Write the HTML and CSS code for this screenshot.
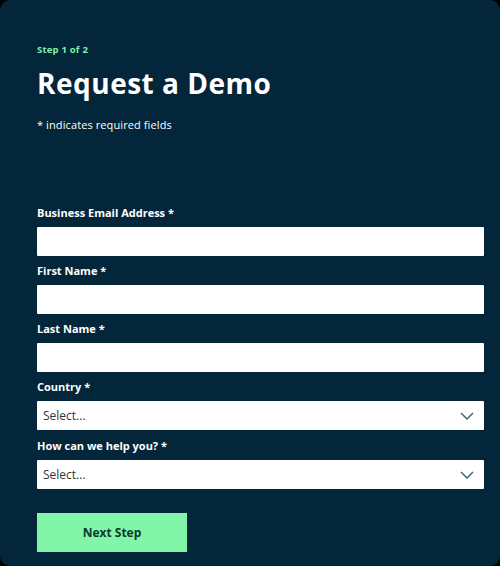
FILE: index.html
```html
<!DOCTYPE html>
<html lang="en">
<head>
    <meta charset="UTF-8">
    <meta name="viewport" content="width=device-width, initial-scale=1.0">
    <title>Request a Demo</title>
    <link rel="stylesheet" href="styles.css">
</head>
<body>
    <div class="container">
        <div class="step">Step 1 of 2</div>
        <h1>Request a Demo</h1>
        <p class="note">* indicates required fields</p>

        <form id="demoForm">
            <div class="form-group">
                <label for="email">Business Email Address *</label>
                <input type="text" id="email" name="email">
            </div>
            <div class="form-group">
                <label for="firstname">First Name *</label>
                <input type="text" id="firstname" name="firstname">
            </div>
            <div class="form-group">
                <label for="lastname">Last Name *</label>
                <input type="text" id="lastname" name="lastname">
            </div>
            <div class="form-group wide">
                <label for="country">Country *</label>
                <div class="select">
                    <select id="country" name="country">
                        <option>Select...</option>
                    </select>
                    <svg class="chevron" viewBox="0 0 14 8" width="14" height="8">
                        <path d="M1 1l6 6 6-6" fill="none" stroke="#4b6b80" stroke-width="1.6"/>
                    </svg>
                </div>
            </div>
            <div class="form-group">
                <label for="help">How can we help you? *</label>
                <div class="select">
                    <select id="help" name="help">
                        <option>Select...</option>
                    </select>
                    <svg class="chevron" viewBox="0 0 14 8" width="14" height="8">
                        <path d="M1 1l6 6 6-6" fill="none" stroke="#4b6b80" stroke-width="1.6"/>
                    </svg>
                </div>
            </div>
            <button type="submit">Next Step</button>
        </form>
    </div>
</body>
</html>
```

FILE: styles.css
```css
html, body {
    margin: 0;
    padding: 0;
    background: #000;
}
body {
    font-family: "Open Sans", Arial, sans-serif;
    width: 500px;
    height: 566px;
}
.container {
    box-sizing: border-box;
    height: 566px;
    background: #03263a;
    border-radius: 10px;
    padding: 44px 16px 0 37px;
    color: #fff;
}
.step {
    color: #7ef3a6;
    font-size: 9.5px;
    font-weight: 700;
    line-height: 12px;
    letter-spacing: 0.2px;
}
h1 {
    margin: 9px 0 0;
    font-size: 28px;
    line-height: 36px;
    font-weight: 700;
    letter-spacing: 0.5px;
}
.note {
    margin: 17px 0 0;
    font-size: 11px;
    line-height: 14px;
    letter-spacing: 0.1px;
}
form {
    margin-top: 74px;
}
.form-group {
    margin-bottom: 8px;
}
.form-group.wide {
    margin-bottom: 9px;
}
label {
    display: block;
    font-size: 11px;
    font-weight: 700;
    line-height: 14px;
    margin-bottom: 7px;
}
input[type="text"], select {
    display: block;
    width: 100%;
    height: 29px;
    border: none;
    border-radius: 1px;
    background: #fff;
    box-sizing: border-box;
    font-family: inherit;
    font-size: 12px;
    padding: 0 6px;
    color: #333;
}
.select {
    position: relative;
}
select {
    appearance: none;
    -webkit-appearance: none;
}
.chevron {
    position: absolute;
    right: 10px;
    top: 11px;
    pointer-events: none;
}
button {
    margin-top: 16px;
    width: 150px;
    height: 39px;
    border: none;
    background: #82f5a9;
    color: #083a2d;
    font-family: inherit;
    font-size: 12px;
    font-weight: 700;
}
```
